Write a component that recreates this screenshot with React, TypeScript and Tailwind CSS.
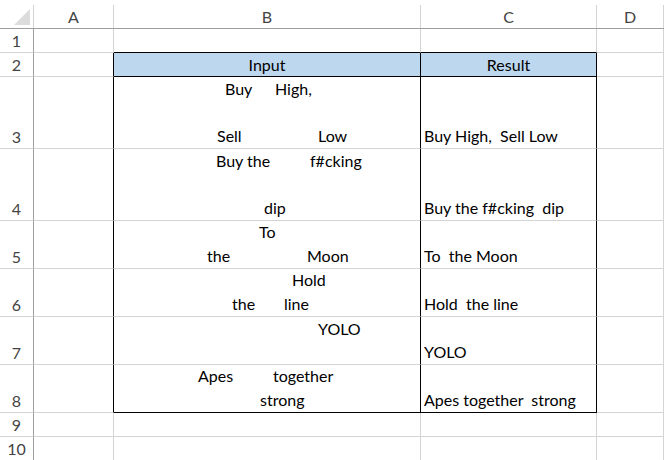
const GRID = "border-[#d4d4d4]";

type Word = [number, string];
type Line = Word[];

// B column content starts at x=114
const B_LEFT = 114;

const WordLine = ({ words }: { words: Line }) => {
  if (words.length === 0) return <div className="h-[24px]" />;
  return (
    <div
      className="flex h-[24px] items-center whitespace-nowrap"
      style={{ paddingLeft: words[0][0] - B_LEFT }}
    >
      {words.map(([x, w], i) => (
        <span
          key={i}
          style={i < words.length - 1 ? { width: words[i + 1][0] - x } : undefined}
          className="shrink-0"
        >
          {w}
        </span>
      ))}
    </div>
  );
};

const rows: { n: number; h: number; input: Line[]; result: string }[] = [
  {
    n: 3,
    h: 72,
    input: [[[225, "Buy"], [275, "High,"]], [], [[217, "Sell"], [318, "Low"]]],
    result: "Buy High,\u00a0 Sell Low",
  },
  {
    n: 4,
    h: 72,
    input: [[[216, "Buy the"], [310, "f#cking"]], [], [[264, "dip"]]],
    result: "Buy the f#cking\u00a0 dip",
  },
  {
    n: 5,
    h: 48,
    input: [[[259, "To"]], [[207, "the"], [307, "Moon"]]],
    result: "To\u00a0 the Moon",
  },
  {
    n: 6,
    h: 48,
    input: [[[292, "Hold"]], [[232, "the"], [284, "line"]]],
    result: "Hold\u00a0 the line",
  },
  {
    n: 7,
    h: 48,
    input: [[[318, "YOLO"]], []],
    result: "YOLO",
  },
  {
    n: 8,
    h: 48,
    input: [[[198, "Apes"], [273, "together"]], [[260, "strong"]]],
    result: "Apes together\u00a0 strong",
  },
];

const ColHead = ({ label }: { label: string }) => (
  <div className="h-[29px] border-b border-[#9e9e9e] pt-[5px]">
    <div className={`flex h-full items-center justify-center border-r ${GRID}`}>{label}</div>
  </div>
);

const RowNum = ({ n, h }: { n: number; h: number }) => (
  <div
    className="flex items-end justify-center border-r border-b border-r-[#9e9e9e] border-b-[#d4d4d4] text-[#444]"
    style={{ height: h }}
  >
    <div className="h-[23px] leading-[23px]">{n}</div>
  </div>
);

const Empty = ({ h, extra = "" }: { h: number; extra?: string }) => (
  <div className={`border-r border-b ${GRID} ${extra}`} style={{ height: h }} />
);

export default function App() {
  return (
    <div
      className="h-[460px] w-[664px] overflow-hidden bg-white text-[16px] text-black"
      style={{ fontFamily: "Lato, 'Open Sans', sans-serif" }}
    >
      <div className="grid grid-cols-[34px_80px_307px_176px_1fr]">
        {/* column headers */}
        <div className="h-[29px] border-b border-[#9e9e9e] pt-[5px]">
          <div className={`relative h-full border-r ${GRID}`}>
            <svg width="34" height="24" viewBox="0 0 34 24" className="absolute left-0 top-0">
              <polygon points="30,4 30,20 14,20" fill="#dcdcdc" />
            </svg>
          </div>
        </div>
        {["A", "B", "C", "D"].map((c) => (
          <div key={c} className="text-[#444]">
            <ColHead label={c} />
          </div>
        ))}

        {/* row 1 */}
        <RowNum n={1} h={24} />
        <Empty h={24} />
        <Empty h={24} extra="!border-b-black" />
        <Empty h={24} extra="!border-b-black" />
        <Empty h={24} />

        {/* row 2 - table header */}
        <RowNum n={2} h={24} />
        <Empty h={24} extra="!border-r-black" />
        <div className="flex h-[24px] items-center justify-center border-r border-b border-black bg-[#bdd7ee]">
          Input
        </div>
        <div className="flex h-[24px] items-center justify-center border-r border-b border-black bg-[#bdd7ee]">
          Result
        </div>
        <Empty h={24} />

        {/* data rows */}
        {rows.map((r, idx) => {
          const last = idx === rows.length - 1;
          const bottom = last ? "border-b-black" : "border-b-[#d4d4d4]";
          return (
            <div key={r.n} className="contents">
              <RowNum n={r.n} h={r.h} />
              <Empty h={r.h} extra="!border-r-black" />
              <div
                className={`flex flex-col justify-end border-r border-b border-r-black ${bottom}`}
                style={{ height: r.h }}
              >
                {r.input.map((line, i) => (
                  <WordLine key={i} words={line} />
                ))}
              </div>
              <div
                className={`flex flex-col justify-end border-r border-b border-r-black ${bottom}`}
                style={{ height: r.h }}
              >
                <div className="h-[24px] whitespace-nowrap pl-[3px] leading-[24px]">{r.result}</div>
              </div>
              <Empty h={r.h} />
            </div>
          );
        })}

        {/* rows 9, 10 */}
        {[9, 10].map((n) => (
          <div key={n} className="contents">
            <RowNum n={n} h={24} />
            <Empty h={24} />
            <Empty h={24} />
            <Empty h={24} />
            <Empty h={24} />
          </div>
        ))}
      </div>
    </div>
  );
}
